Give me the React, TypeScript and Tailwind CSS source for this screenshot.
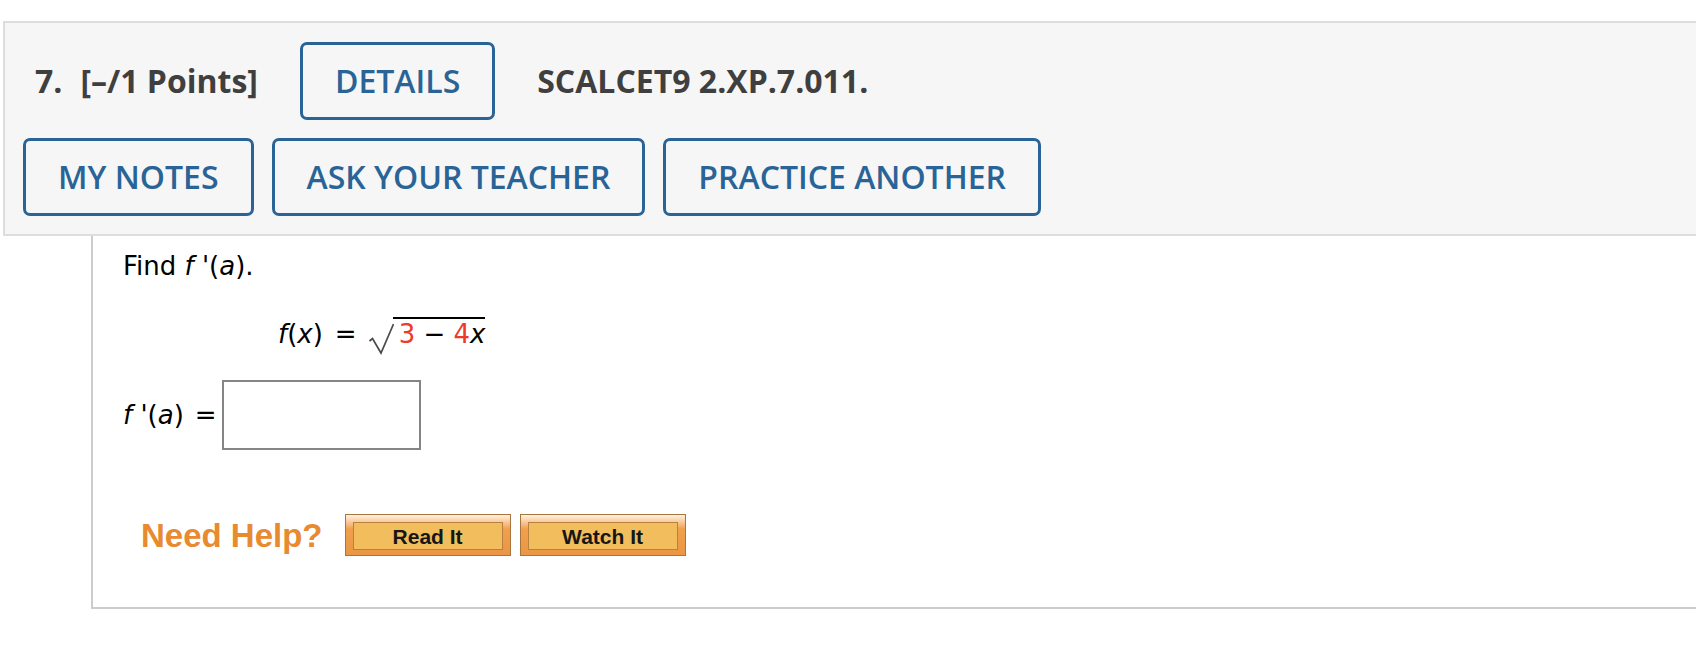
// Question panel — header with action buttons, then the problem body

const heading = "font-['Open_Sans','DejaVu_Sans',sans-serif]";
const mathFont = "font-['DejaVu_Sans',Verdana,sans-serif]";

function OutlineButton({ children }: { children: React.ReactNode }) {
  return (
    <button
      type="button"
      className={`${heading} h-[78px] px-[32px] rounded-[7px] border-[3px] border-[#2a6496] bg-transparent text-[#2a6496] text-[32px] font-semibold leading-none whitespace-nowrap`}
    >
      {children}
    </button>
  );
}

function HelpButton({ label, className = "" }: { label: string; className?: string }) {
  return (
    <div
      className={`w-[166px] h-[42px] border border-[#a8763c] bg-gradient-to-b from-[#fff1de] via-[#f0a04c] via-35% to-[#eb9645] pt-[7px] pb-[5px] px-[7px] ${className}`}
    >
      <div className="h-full border border-[#b98140] bg-[#f2bd5c] flex items-center justify-center">
        <span className="font-['Liberation_Sans',Arial,sans-serif] font-bold text-[21px] leading-none text-[#161616]">
          {label}
        </span>
      </div>
    </div>
  );
}

function Radical({ children }: { children: React.ReactNode }) {
  return (
    <span className="relative inline-block pl-[24px]">
      <svg
        className="absolute left-0 bottom-[-3px]"
        width="25"
        height="32"
        viewBox="0 0 25 32"
      >
        <path d="M0.5 18 L3.5 15.5 L12 30 L24.5 1" stroke="#4a4a4a" strokeWidth="1.7" fill="none" />
      </svg>
      <span className="inline-block border-t-2 border-black pl-[6px] leading-[30px]">{children}</span>
    </span>
  );
}

export default function App() {
  return (
    <div className="w-[1696px] h-[662px] bg-white overflow-hidden">
      {/* HEADER */}
      <div className="mt-[21px] ml-[3px] border-2 border-r-0 border-[#dddddd] bg-[#f6f6f6] pt-[19px] pb-[18px] pl-[18px]">
        <div className="flex items-center h-[78px] pl-3 text-[#3f3f3f] text-[32px] font-bold">
          <span className={heading}>7.</span>
          <span className={`${heading} ml-[18px]`}>[–/1 Points]</span>
          <div className="ml-[42px]">
            <OutlineButton>DETAILS</OutlineButton>
          </div>
          <span className={`${heading} ml-[42px]`}>SCALCET9 2.XP.7.011.</span>
        </div>
        <div className="flex items-center gap-[18px] mt-[18px]">
          <OutlineButton>MY NOTES</OutlineButton>
          <OutlineButton>ASK YOUR TEACHER</OutlineButton>
          <OutlineButton>PRACTICE ANOTHER</OutlineButton>
        </div>
      </div>

      {/* PROBLEM BODY */}
      <div className={`${mathFont} ml-[91px] border-l-2 border-b-2 border-[#cccccc] pl-[30px] pt-[12px] pb-[51px] text-[26px] text-black`}>
        <p className="leading-[36px]">
          Find <i>f</i> '(<i>a</i>).
        </p>

        <p className="mt-[32px] ml-[155px] leading-[36px] whitespace-nowrap">
          <i>f</i>(<i>x</i>)<span className="mx-[12px]">=</span>
          <Radical>
            <span className="text-[#ee3a2a]">3</span> − <span className="text-[#ee3a2a]">4</span>
            <i>x</i>
          </Radical>
        </p>

        <div className="flex items-center mt-[28px]">
          <span className="leading-[36px] whitespace-nowrap">
            <i>f</i> '(<i>a</i>)<span className="ml-[11px]">=</span>
          </span>
          <input
            type="text"
            className="ml-[5px] w-[199px] h-[70px] border-2 border-[#858585] bg-white outline-none"
          />
        </div>

        <div className="flex items-center mt-[64px] pl-[18px]">
          <span className="font-['Liberation_Sans',Arial,sans-serif] font-bold text-[33px] leading-none text-[#e88a30] whitespace-nowrap">
            Need Help?
          </span>
          <HelpButton label="Read It" className="ml-[22px]" />
          <HelpButton label="Watch It" className="ml-[9px]" />
        </div>
      </div>
    </div>
  );
}
